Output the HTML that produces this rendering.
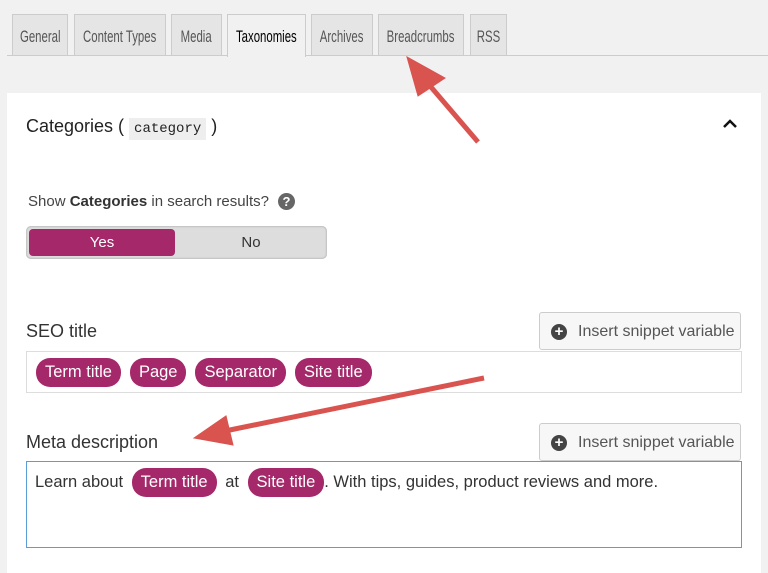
<!DOCTYPE html><html><head><style>
body{margin:0;width:768px;height:568px;background:#f1f1f1;font-family:"Liberation Sans",sans-serif;position:relative;overflow:hidden}
.tab{position:absolute;top:14px;height:41px;background:#e5e5e5;border:1px solid #ccc;border-bottom:none;box-sizing:border-box;font-size:17px;color:#555;text-align:center;line-height:44px;white-space:nowrap}
.tab span{display:inline-block;transform:scaleX(0.67);transform-origin:center;margin:0 -20px}
.tab.on{background:#f1f1f1;color:#000;height:43px}
.line{position:absolute;left:7px;right:0;top:55px;border-top:1px solid #ccc}
.panel{position:absolute;left:7px;top:93px;width:754px;height:480px;background:#fff}
.abs{position:absolute}
.pill{display:inline-block;background:#a4286a;color:#fff;border-radius:14px;padding:0 9px;height:29px;line-height:29px;font-size:16.5px;margin-right:9px}
.btn{position:absolute;left:539px;width:202px;height:38px;box-sizing:border-box;border:1px solid #ccc;background:#f7f7f7;border-radius:3px;font-size:16px;color:#555;line-height:37px}
.btn i{position:absolute;left:11px;top:11px;width:16px;height:16px;border-radius:50%;background:#444;color:#fff;font-style:normal;font-weight:bold;font-size:15px;line-height:16px;text-align:center}
.btn span{position:absolute;left:38px}
.field{position:absolute;left:26px;width:716px;box-sizing:border-box;border:1px solid #ddd;background:#fff}
</style></head><body>
<div class="line"></div>
<div class="tab" style="left:12px;width:56px"><span>General</span></div>
<div class="tab" style="left:74px;width:92px"><span>Content Types</span></div>
<div class="tab" style="left:171px;width:51px"><span>Media</span></div>
<div class="tab on" style="left:227px;width:79px"><span>Taxonomies</span></div>
<div class="tab" style="left:311px;width:62px"><span>Archives</span></div>
<div class="tab" style="left:378px;width:86px"><span>Breadcrumbs</span></div>
<div class="tab" style="left:470px;width:37px"><span>RSS</span></div>
<div class="panel"></div>
<div class="abs" style="left:26px;top:116px;font-size:18px;color:#222">Categories ( <span style="background:#eee;font-size:14px;padding:3px 5px;font-family:'Liberation Mono',monospace">category</span> )</div>
<svg class="abs" style="left:721px;top:118px" width="18" height="12"><path d="M3 9 L9 3 L15 9" stroke="#111" stroke-width="2.5" fill="none"/></svg>
<div class="abs" style="left:28px;top:193px;font-size:15px;color:#444">Show <b style="color:#333">Categories</b> in search results?</div>
<div class="abs" style="left:278px;top:193px;width:17px;height:17px;border-radius:50%;background:#666;color:#fff;font-size:13px;font-weight:bold;text-align:center;line-height:17px">?</div>
<div class="abs" style="left:26px;top:226px;width:301px;height:33px;background:#ddd;border-radius:5px;box-shadow:inset 0 0 2px #999"></div>
<div class="abs" style="left:29px;top:229px;width:146px;height:27px;background:#a4286a;border-radius:4px;color:#fff;text-align:center;line-height:27px;font-size:15px">Yes</div>
<div class="abs" style="left:176px;top:229px;width:150px;height:27px;color:#333;text-align:center;line-height:27px;font-size:15px">No</div>
<div class="abs" style="left:26px;top:321px;font-size:18px;color:#333">SEO title</div>
<div class="btn" style="top:312px"><i>+</i><span>Insert snippet variable</span></div>
<div class="field" style="top:351px;height:42px;padding:6px 9px"><span class="pill">Term title</span><span class="pill">Page</span><span class="pill">Separator</span><span class="pill">Site title</span></div>
<div class="abs" style="left:26px;top:432px;font-size:18px;color:#333">Meta description</div>
<div class="btn" style="top:423px"><i>+</i><span>Insert snippet variable</span></div>
<div class="field" style="top:461px;height:87px;border:1px solid #5b9dd9;padding:6px 8px;font-size:16.5px;color:#333;line-height:29px">Learn about <span class="pill" style="margin:0 4px">Term title</span> at <span class="pill" style="margin:0 0 0 4px">Site title</span>. With tips, guides, product reviews and more.</div>
<svg class="abs" style="left:0;top:0" width="768" height="568">
<g fill="#d9534f" stroke="#d9534f">
<line x1="478" y1="142" x2="425" y2="80" stroke-width="5"/>
<polygon points="407,57 445,78 418,96" stroke-width="1"/>
<line x1="484" y1="378" x2="225" y2="431" stroke-width="5"/>
<polygon points="194,438 226,416 233,445" stroke-width="1"/>
</g></svg>
</body></html>
